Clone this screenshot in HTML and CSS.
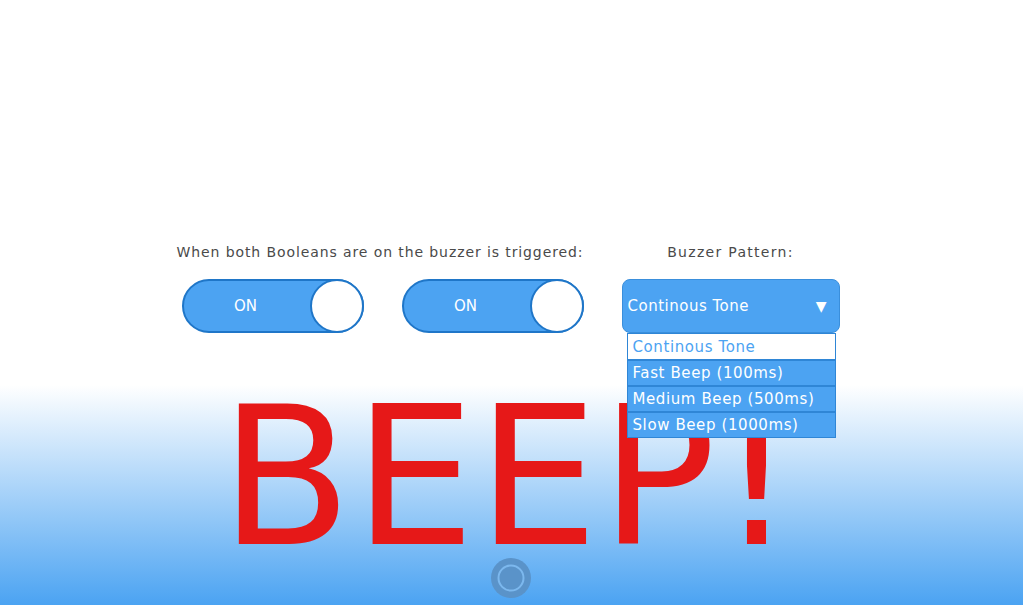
FILE: index.html
```html
<!DOCTYPE html>
<html>
<head>
<meta charset="utf-8">
<link rel="stylesheet" href="styles.css">
</head>
<body>
<div class="page">
  <div class="controls">
    <div class="group group-bools">
      <div class="label label-wide">When both Booleans are on the buzzer is triggered:</div>
      <div class="toggles">
        <div class="toggle"><span class="toggle-text">ON</span><span class="knob"></span></div>
        <div class="toggle"><span class="toggle-text">ON</span><span class="knob"></span></div>
      </div>
    </div>
    <div class="group group-pattern">
      <div class="label label-short">Buzzer Pattern:</div>
      <div class="select-wrap">
        <div class="select"><span>Continous Tone</span><span class="arrow">▼</span></div>
        <ul class="options">
          <li class="option selected">Continous Tone</li>
          <li class="option">Fast Beep (100ms)</li>
          <li class="option">Medium Beep (500ms)</li>
          <li class="option">Slow Beep (1000ms)</li>
        </ul>
      </div>
    </div>
  </div>
  <div class="beep">BEEP!</div>
</div>
<div class="home">
  <svg width="42" height="42" viewBox="0 0 42 42">
    <circle cx="21" cy="21" r="20" fill="#5a93c9"/>
    <circle cx="21" cy="21" r="12.5" fill="none" stroke="#7cb8ee" stroke-width="2"/>
  </svg>
</div>
</body>
</html>
```
FILE: styles.css
```css
html, body {
  margin: 0;
  padding: 0;
}
body {
  width: 1023px;
  height: 605px;
  overflow: hidden;
  font-family: "DejaVu Sans", Verdana, sans-serif;
  background: linear-gradient(to bottom, #ffffff 0px, #ffffff 385px, #4ba3f2 605px);
  position: relative;
}
.page {
  display: flex;
  flex-direction: column;
  align-items: center;
  padding-top: 244px;
}
.controls {
  display: flex;
  gap: 38px;
  margin-left: -2px;
}
.group {
  display: flex;
  flex-direction: column;
  align-items: center;
}
.group-bools {
  width: 402px;
}
.group-pattern {
  width: 218px;
}
.label {
  font-size: 14px;
  line-height: 17px;
  color: #4a4a4a;
  height: 17px;
  white-space: nowrap;
}
.label-wide {
  letter-spacing: 0.9px;
  margin-right: 5px;
}
.label-short {
  letter-spacing: 1.3px;
}
.toggles {
  display: flex;
  gap: 38px;
  margin-top: 18px;
}
.toggle {
  box-sizing: border-box;
  width: 182px;
  height: 54px;
  border-radius: 27px;
  background: #4ca3f2;
  border: 2px solid #1f76c8;
  display: flex;
  align-items: center;
  position: relative;
}
.toggle-text {
  width: 124px;
  text-align: center;
  color: #fff;
  font-size: 15px;
}
.knob {
  position: absolute;
  right: -2px;
  top: -2px;
  box-sizing: border-box;
  width: 54px;
  height: 54px;
  border-radius: 50%;
  background: #fff;
  border: 2px solid #1f76c8;
}
.select-wrap {
  position: relative;
  margin-top: 18px;
}
.select {
  box-sizing: border-box;
  width: 218px;
  height: 54px;
  border-radius: 8px;
  background: #4ca3f2;
  border: 1px solid #3a8fdc;
  color: #fff;
  font-size: 15px;
  letter-spacing: 0.5px;
  display: flex;
  align-items: center;
  justify-content: space-between;
  padding: 0 12px 0 5px;
}
.arrow {
  font-size: 14px;
  letter-spacing: 0;
}
.options {
  position: absolute;
  left: 5px;
  top: 54px;
  margin: 0;
  padding: 0;
  list-style: none;
  width: 209px;
  box-sizing: border-box;
  border: 1px solid #2f86d6;
  border-top: none;
}
.option {
  box-sizing: border-box;
  height: 26px;
  line-height: 24px;
  padding-left: 5px;
  background: #4ca3f2;
  color: #fff;
  font-size: 15px;
  letter-spacing: 0.6px;
  border-top: 2px solid #2f86d6;
}
.option.selected {
  background: #fff;
  color: #4ca3f2;
  border-top: 1px solid #2f86d6;
  line-height: 26px;
}
.beep {
  margin-top: 49px;
  margin-right: 6px;
  font-size: 192px;
  line-height: 192px;
  letter-spacing: 2px;
  color: #e61818;
  white-space: nowrap;
}
.home {
  position: absolute;
  left: 490px;
  top: 557px;
  width: 42px;
  height: 42px;
}
.home svg {
  display: block;
}
```
